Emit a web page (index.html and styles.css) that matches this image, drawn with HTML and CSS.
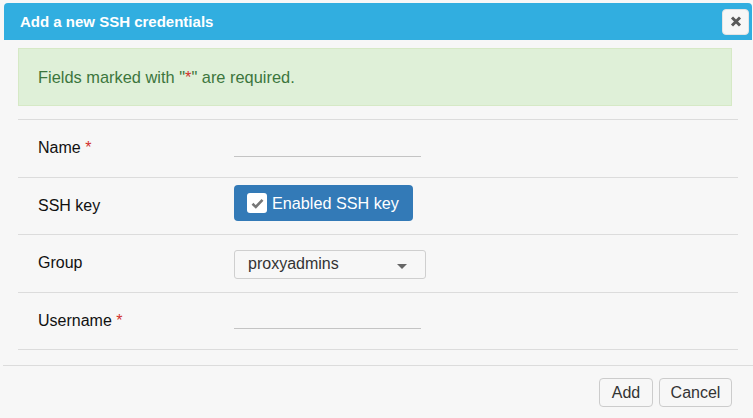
FILE: index.html
```html
<!DOCTYPE html>
<html>
<head>
<meta charset="utf-8">
<link rel="stylesheet" href="styles.css">
</head>
<body>
<div class="modal">
  <div class="modal-header">
    <span class="modal-title">Add a new SSH credentials</span>
    <button class="close-btn" aria-label="Close">
      <svg width="12" height="11" viewBox="0 0 12 11"><path d="M2 1.5 L10 9.5 M10 1.5 L2 9.5" stroke="#5a5a5a" stroke-width="3" stroke-linecap="butt"/></svg>
    </button>
  </div>
  <div class="modal-body">
    <div class="alert">Fields marked with "<span class="req">*</span>" are required.</div>
    <div class="form">
      <div class="row">
        <label class="label">Name <span class="req">*</span></label>
        <div class="field"><input class="line-input" type="text"></div>
      </div>
      <div class="row">
        <label class="label">SSH key</label>
        <div class="field">
          <span class="toggle-btn">
            <span class="check-box"><svg width="13" height="11" viewBox="0 0 13 11"><path d="M1.5 5.8 L4.8 9 L11.5 1.8" fill="none" stroke="#777" stroke-width="2.6"/></svg></span>
            Enabled SSH key
          </span>
        </div>
      </div>
      <div class="row">
        <label class="label">Group</label>
        <div class="field">
          <span class="select">proxyadmins<span class="caret"></span></span>
        </div>
      </div>
      <div class="row">
        <label class="label">Username <span class="req">*</span></label>
        <div class="field"><input class="line-input" type="text"></div>
      </div>
    </div>
  </div>
  <div class="modal-footer">
    <button class="btn btn-add">Add</button>
    <button class="btn btn-cancel">Cancel</button>
  </div>
</div>
</body>
</html>
```

FILE: styles.css
```css
html, body {
  margin: 0;
  padding: 0;
  background: #f7f7f7;
  font-family: "Liberation Sans", Arial, sans-serif;
  font-size: 16px;
  color: #111;
}

.modal {
  margin: 3px 0 0 3px;
}

.modal-header {
  margin-left: 1px;
  margin-right: 1px;
  height: 37px;
  background: #31aee0;
  border-radius: 4px 4px 0 0;
  display: flex;
  align-items: center;
  justify-content: space-between;
  padding: 0 3px 0 16px;
}

.modal-title {
  color: #fff;
  font-weight: bold;
  font-size: 15px;
}

.close-btn {
  width: 27px;
  height: 26px;
  background: #f7f7f7;
  border: 1px solid #e4e4e4;
  border-radius: 4px;
  padding: 0;
  display: flex;
  align-items: center;
  justify-content: center;
}

.modal-body {
  padding: 8px 0 0 15px;
}

.alert {
  width: 673px;
  height: 56px;
  background: #dff0d8;
  border: 1px solid #d6e9c6;
  color: #3c763d;
  padding: 0 20px 0 19px;
  display: flex;
  align-items: center;
  font-size: 16.4px;
}

.req {
  color: #d2322d;
}

.form {
  margin-top: 13px;
  width: 720px;
  border-bottom: 1px solid #dcdcdc;
}

.row {
  height: 56.5px;
  border-top: 1px solid #dcdcdc;
  display: flex;
  align-items: center;
}

.label {
  width: 196px;
  padding-left: 20px;
}

.field {
  display: flex;
  align-items: center;
}

.line-input {
  width: 187px;
  height: 14px;
  margin: 2px 0 0 0;
  padding: 0;
  border: none;
  border-bottom: 1px solid #c4c4c4;
  background: transparent;
  outline: none;
}

.toggle-btn {
  display: flex;
  align-items: center;
  gap: 5px;
  height: 36px;
  width: 179px;
  box-sizing: border-box;
  padding-left: 13px;
  margin-top: -5px;
  background: #337ab7;
  border-radius: 4px;
  color: #fff;
  font-size: 16.2px;
}

.check-box {
  width: 20px;
  height: 20px;
  background: #fff;
  border-radius: 3px;
  display: flex;
  align-items: center;
  justify-content: center;
}

.select {
  position: relative;
  display: flex;
  align-items: center;
  width: 192px;
  height: 29px;
  box-sizing: border-box;
  margin-top: 2px;
  padding-left: 13px;
  border: 1px solid #cfcfcf;
  border-radius: 3px;
  background: #f7f7f7;
  color: #333;
}

.caret {
  position: absolute;
  right: 18px;
  top: 13px;
  width: 0;
  height: 0;
  border-left: 5px solid transparent;
  border-right: 5px solid transparent;
  border-top: 5px solid #666;
}

.modal-footer {
  margin-top: 15px;
  border-top: 1px solid #dcdcdc;
  display: flex;
  justify-content: flex-end;
  gap: 6px;
  padding: 12px 21px 0 0;
}

.btn {
  height: 29px;
  padding: 0;
  background: #f7f7f7;
  border: 1px solid #cccccc;
  border-radius: 4px;
  font-family: "Liberation Sans", Arial, sans-serif;
  font-size: 16px;
  color: #333;
}

.btn-add {
  width: 54px;
}

.btn-cancel {
  width: 73px;
}
```
